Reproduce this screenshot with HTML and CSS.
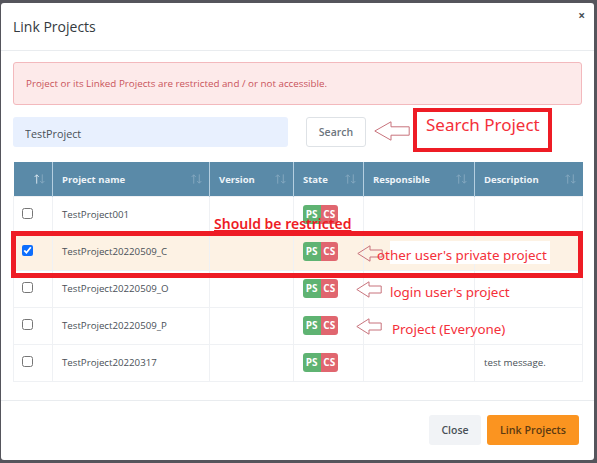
FILE: index.html
```html
<!DOCTYPE html>
<html>
<head lang="en">
    <meta charset="UTF-8">
    <title>Link Projects</title>
    <link rel="stylesheet" href="styles.css">
</head>
<body>

<div class="modal">
    <div class="modal-header">
        <h5 class="modal-title">Link Projects</h5>
        <span class="modal-close">×</span>
    </div>

    <div class="modal-body">
        <div class="alert">Project or its Linked Projects are restricted and / or not accessible.</div>

        <div class="search-row">
            <input class="search-input" type="text" value="TestProject">
            <button class="btn btn-search">Search</button>
        </div>

        <table class="project-table">
            <colgroup>
                <col class="col-check">
                <col class="col-name">
                <col class="col-version">
                <col class="col-state">
                <col class="col-resp">
                <col class="col-desc">
            </colgroup>
            <thead>
                <tr>
                    <th class="th-check"><svg class="sort" viewBox="0 0 14 12"><path class="up on" d="M4 11V1.5M1.8 3.8 4 1.5l2.2 2.3"/><path class="down" d="M10 1v9.500M7.800 8.200 10 10.500l2.200-2.300"/></svg></th>
                    <th>Project name<svg class="sort" viewBox="0 0 14 12"><path class="up" d="M4 11V1.500M1.800 3.800 4 1.500l2.200 2.300"/><path class="down" d="M10 1v9.500M7.800 8.200 10 10.500l2.200-2.300"/></svg></th>
                    <th>Version<svg class="sort" viewBox="0 0 14 12"><path class="up" d="M4 11V1.500M1.800 3.800 4 1.500l2.200 2.300"/><path class="down" d="M10 1v9.500M7.800 8.200 10 10.500l2.200-2.300"/></svg></th>
                    <th>State<svg class="sort" viewBox="0 0 14 12"><path class="up" d="M4 11V1.500M1.800 3.800 4 1.500l2.200 2.300"/><path class="down" d="M10 1v9.500M7.800 8.200 10 10.500l2.200-2.300"/></svg></th>
                    <th>Responsible<svg class="sort" viewBox="0 0 14 12"><path class="up" d="M4 11V1.500M1.800 3.800 4 1.500l2.200 2.300"/><path class="down" d="M10 1v9.500M7.800 8.200 10 10.500l2.200-2.300"/></svg></th>
                    <th>Description<svg class="sort" viewBox="0 0 14 12"><path class="up" d="M4 11V1.500M1.800 3.800 4 1.500l2.200 2.300"/><path class="down" d="M10 1v9.500M7.800 8.200 10 10.500l2.200-2.300"/></svg></th>
                </tr>
            </thead>
            <tbody>
                <tr>
                    <td class="td-check"><input type="checkbox"></td>
                    <td>TestProject001</td>
                    <td></td>
                    <td><span class="state"><b class="ps">PS</b><b class="cs">CS</b></span></td>
                    <td></td>
                    <td></td>
                </tr>
                <tr class="selected">
                    <td class="td-check"><input type="checkbox" checked></td>
                    <td>TestProject20220509_C</td>
                    <td></td>
                    <td><span class="state"><b class="ps">PS</b><b class="cs">CS</b></span></td>
                    <td></td>
                    <td></td>
                </tr>
                <tr>
                    <td class="td-check"><input type="checkbox"></td>
                    <td>TestProject20220509_O</td>
                    <td></td>
                    <td><span class="state"><b class="ps">PS</b><b class="cs">CS</b></span></td>
                    <td></td>
                    <td></td>
                </tr>
                <tr>
                    <td class="td-check"><input type="checkbox"></td>
                    <td>TestProject20220509_P</td>
                    <td></td>
                    <td><span class="state"><b class="ps">PS</b><b class="cs">CS</b></span></td>
                    <td></td>
                    <td></td>
                </tr>
                <tr>
                    <td class="td-check"><input type="checkbox"></td>
                    <td>TestProject20220317</td>
                    <td></td>
                    <td><span class="state"><b class="ps">PS</b><b class="cs">CS</b></span></td>
                    <td></td>
                    <td>test message.</td>
                </tr>
            </tbody>
        </table>
    </div>

    <div class="modal-footer">
        <button class="btn btn-close">Close</button>
        <button class="btn btn-link">Link Projects</button>
    </div>
</div>

<!-- annotations drawn on top of the screenshot -->
<div class="note-search">Search Project</div>
<svg class="arrow arrow-search" viewBox="0 0 36 20"><path d="M.8 10 17 .8v5h18.200v8.400H17v5z"/></svg>
<div class="note-restricted">Should be restricted</div>
<div class="note-row-box"></div>
<div class="note-white"></div>
<svg class="arrow arrow-1" viewBox="0 0 26 17"><path d="M.8 8.500 13 .8v4.200h12.200v7H13v4.200z"/></svg>
<div class="note note-1">other user's private project</div>
<svg class="arrow arrow-2" viewBox="0 0 26 17"><path d="M.8 8.500 13 .8v4.200h12.200v7H13v4.200z"/></svg>
<div class="note note-2">login user's project</div>
<svg class="arrow arrow-3" viewBox="0 0 26 17"><path d="M.8 8.500 13 .8v4.200h12.200v7H13v4.200z"/></svg>
<div class="note note-3">Project (Everyone)</div>

</body>
</html>
```

FILE: styles.css
```css
html, body {
    margin: 0;
    padding: 0;
}

body {
    position: relative;
    width: 597px;
    height: 463px;
    overflow: hidden;
    padding: 3px 3px 3px 1px;
    box-sizing: border-box;
    background: #55555c;
    font-family: "Open Sans", "Noto Sans", sans-serif;
    color: #495057;
}

.modal {
    height: 457px;
    background: #ffffff;
    border-radius: 3px;
    display: flex;
    flex-direction: column;
}

.modal-header {
    height: 47px;
    border-bottom: 1px solid #e9ecef;
    display: flex;
    justify-content: space-between;
    padding: 0 9px 0 12px;
}

.modal-title {
    margin: 0;
    font-size: 14px;
    font-weight: 500;
    line-height: 47px;
    color: #343a40;
}

.modal-close {
    font-size: 12px;
    font-weight: 700;
    line-height: 26px;
    color: #495057;
}

.modal-body {
    flex: 1;
    padding: 11px 12px 0 12px;
}

.alert {
    height: 43px;
    box-sizing: border-box;
    border: 1px solid #f3b9bd;
    border-radius: 3px;
    background: #fdeaea;
    color: #c9535b;
    font-size: 9.800px;
    line-height: 41px;
    padding-left: 12px;
}

.search-row {
    display: flex;
    margin-top: 12px;
}

.search-input {
    width: 275px;
    height: 30px;
    box-sizing: border-box;
    border: 0;
    border-radius: 3px;
    background: #e8f0fe;
    padding: 2px 0 0 12px;
    font-family: inherit;
    font-size: 10.800px;
    color: #495057;
}

.btn {
    font-family: inherit;
    font-weight: 600;
    border-radius: 3px;
    height: 30px;
    box-sizing: border-box;
    padding: 0;
}

.btn-search {
    width: 60px;
    margin-left: 18px;
    border: 1.500px solid #dee2e6;
    background: #ffffff;
    font-size: 10.500px;
    color: #6c757d;
}

.project-table {
    width: 569px;
    margin-top: 15px;
    border-collapse: collapse;
    table-layout: fixed;
    font-size: 9.700px;
}

.col-check { width: 39px; }
.col-name { width: 157px; }
.col-version { width: 84px; }
.col-state { width: 70px; }
.col-resp { width: 111px; }
.col-desc { width: 108px; }

.project-table th {
    position: relative;
    height: 34px;
    padding: 2px 0 0 9px;
    box-sizing: border-box;
    background: #5a8aa8;
    border-left: 1px solid #b5cfe0;
    color: #eef4f8;
    font-size: 9.500px;
    font-weight: 700;
    text-align: left;
}

.project-table th:first-child {
    border-left: 0;
}

.sort {
    position: absolute;
    right: 6px;
    top: 11px;
    width: 13px;
    height: 12px;
}

.sort path {
    fill: none;
    stroke: #86a9c0;
    stroke-width: 1;
}

.sort path.on {
    stroke: #dfeaf2;
}

.project-table td {
    height: 37px;
    padding: 0 0 0 9px;
    box-sizing: border-box;
    border: 1px solid #eff1f4;
    color: #495057;
    vertical-align: middle;
}

.project-table td.td-check {
    padding-left: 8px;
}

.td-check input {
    display: block;
    margin: -3px 0 0 0;
    width: 11px;
    height: 11px;
    accent-color: #0d6efd;
}

.selected td {
    background: #fdf2e4;
}

.state {
    display: inline-flex;
    height: 19px;
    border-radius: 3px;
    overflow: hidden;
    vertical-align: middle;
}

.state b {
    width: 17.500px;
    color: #ffffff;
    font-size: 10px;
    line-height: 19px;
    text-align: center;
}

.ps { background: #5fb372; }
.cs { background: #e0666f; }

.modal-footer {
    height: 60px;
    border-top: 1px solid #e9ecef;
    display: flex;
    justify-content: flex-end;
    align-items: flex-start;
    gap: 6px;
    padding: 14px 15px 0 0;
    box-sizing: border-box;
}

.btn-close {
    width: 52px;
    border: 0;
    background: #f1f3f6;
    color: #495057;
    font-size: 10.500px;
}

.btn-link {
    width: 92px;
    border: 0;
    background: #fb9420;
    color: #5b3a12;
    font-size: 10.700px;
}

/* annotations */
.note-search {
    position: absolute;
    left: 413px;
    top: 108px;
    width: 139px;
    height: 44px;
    box-sizing: border-box;
    border: 4.500px solid #ee1c25;
    background: #ffffff;
    color: #f4303a;
    font-family: "Noto Sans", sans-serif;
    font-size: 17px;
    line-height: 26px;
    padding-left: 9px;
    white-space: nowrap;
}

.note-restricted {
    position: absolute;
    left: 214px;
    top: 215px;
    color: #ee1c25;
    font-family: "Noto Sans", sans-serif;
    font-size: 14px;
    font-weight: 600;
    line-height: 18px;
    text-decoration: underline;
    white-space: nowrap;
}

.note-row-box {
    position: absolute;
    left: 11px;
    top: 231px;
    width: 572px;
    height: 47px;
    box-sizing: border-box;
    border: 5px solid #ee1c25;
}

.note-white {
    position: absolute;
    left: 390px;
    top: 241px;
    width: 160px;
    height: 23px;
    background: #ffffff;
}

.note {
    position: absolute;
    color: #f4303a;
    font-family: "Noto Sans", sans-serif;
    font-size: 13.400px;
    line-height: 18px;
    white-space: nowrap;
}

.note-1 { left: 377px; top: 246px; }
.note-2 { left: 390px; top: 283px; }
.note-3 { left: 392px; top: 320px; }

.arrow {
    position: absolute;
}

.arrow path {
    fill: #ffffff;
    stroke: #c8737c;
    stroke-width: 1;
}

.arrow-1 path { fill: none; }

.arrow-search { left: 374px; top: 121px; width: 36px; height: 20px; }
.arrow-1 { left: 357px; top: 245px; width: 26px; height: 17px; }
.arrow-2 { left: 356px; top: 281px; width: 26px; height: 17px; }
.arrow-3 { left: 356px; top: 318px; width: 26px; height: 17px; }
```
